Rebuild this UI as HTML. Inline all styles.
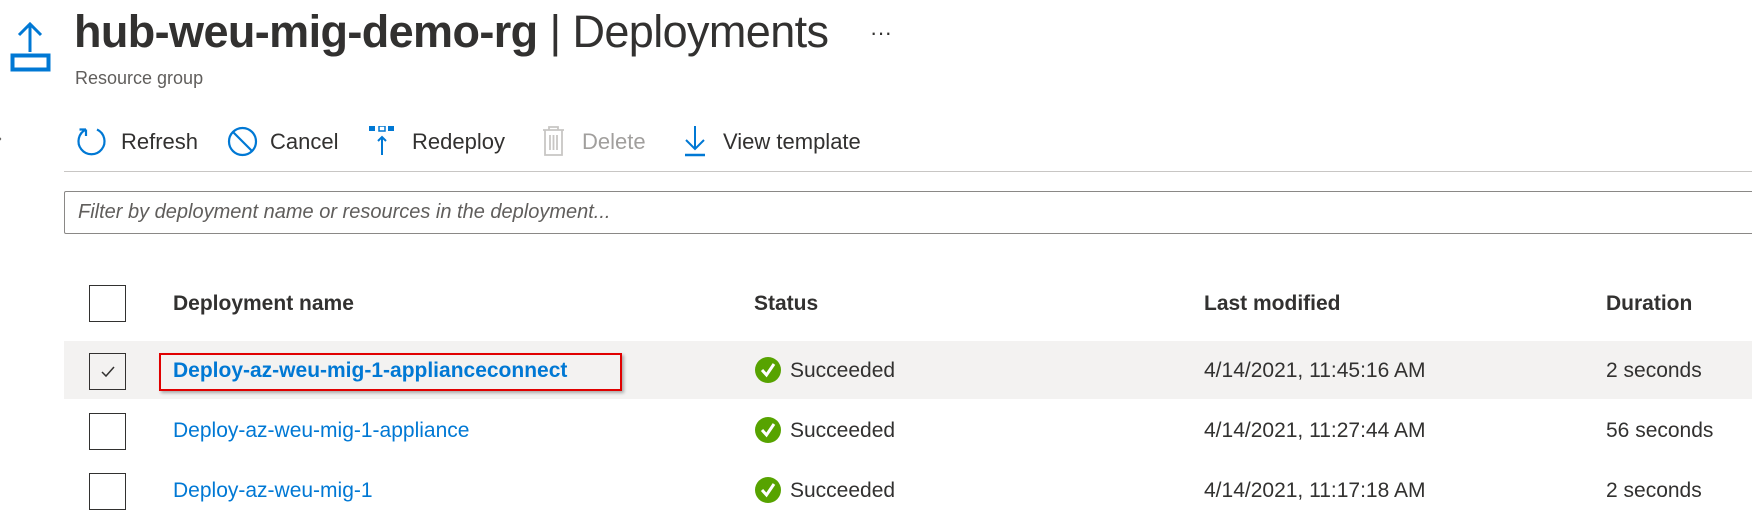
<!DOCTYPE html>
<html><head><meta charset="utf-8"><style>
body{margin:0;width:1752px;height:529px;background:#fff;font-family:"Liberation Sans",sans-serif;color:#323130;position:relative;overflow:hidden}
.a{position:absolute;white-space:nowrap}
.tb{font-size:22px;color:#323130}
.hd{font-size:21px;font-weight:bold;color:#323130}
.cb{position:absolute;width:35px;height:35px;border:1px solid #323130;left:89px}
.lk{color:#0078d4;font-size:21px}
.tx{font-size:21px;color:#323130}
</style></head><body>
<svg class="a" style="left:10px;top:22px" width="42" height="50" viewBox="0 0 42 50"><path d="M20 2V30M9 13L20 2L31 13" stroke="#0078d4" stroke-width="3" fill="none"/><rect x="2.5" y="33.5" width="36" height="14" stroke="#0078d4" stroke-width="4" fill="none"/></svg>
<div class="a" style="left:74px;top:6px;font-size:45px;color:#323130;letter-spacing:-0.6px"><b>hub-weu-mig-demo-rg</b> | Deployments</div>
<div class="a" style="left:870px;top:20px;font-size:22px;color:#323130">···</div>
<div class="a" style="left:75px;top:68px;font-size:18px;color:#605e5c">Resource group</div>
<div class="a" style="left:-4px;top:128px;font-size:18px;color:#605e5c">›</div>
<svg class="a" style="left:76px;top:126px" width="31" height="31" viewBox="0 0 31 31"><path d="M10 3.5A13 13 0 1 0 21 3.5M10 3.5V10M10 3.5H3.5" stroke="#0078d4" stroke-width="2.2" fill="none"/></svg>
<div class="a tb" style="left:121px;top:129px">Refresh</div>
<svg class="a" style="left:227px;top:126px" width="31" height="31" viewBox="0 0 31 31"><circle cx="15.5" cy="15.5" r="13.5" stroke="#0078d4" stroke-width="2.2" fill="none"/><path d="M6 6L25 25" stroke="#0078d4" stroke-width="2.2"/></svg>
<div class="a tb" style="left:270px;top:129px">Cancel</div>
<svg class="a" style="left:369px;top:126px" width="28" height="30" viewBox="0 0 28 30"><rect x="0" y="0" width="6" height="5" fill="#0078d4"/><rect x="10" y="0" width="6" height="5" fill="none" stroke="#0078d4" stroke-width="1.5"/><rect x="19" y="0" width="6" height="5" fill="#0078d4"/><path d="M13 29V11M9 15L13 11L17 15" stroke="#0078d4" stroke-width="2" fill="none"/></svg>
<div class="a tb" style="left:412px;top:129px">Redeploy</div>
<svg class="a" style="left:541px;top:125px" width="25" height="32" viewBox="0 0 25 32"><path d="M2 5H23M8 5V2H17V5M4 5V30H21V5M9 10V25M12.5 10V25M16 10V25" stroke="#c8c6c4" stroke-width="1.8" fill="none"/></svg>
<div class="a tb" style="left:582px;top:129px;color:#a19f9d">Delete</div>
<svg class="a" style="left:683px;top:125px" width="24" height="32" viewBox="0 0 24 32"><path d="M12 1V24M3 15L12 24L21 15" stroke="#0078d4" stroke-width="2" fill="none"/><path d="M2 30H22" stroke="#0078d4" stroke-width="2.5"/></svg>
<div class="a tb" style="left:723px;top:129px">View template</div>
<div class="a" style="left:64px;top:171px;width:1688px;height:1px;background:#c8c6c4"></div>
<div class="a" style="left:64px;top:191px;width:1690px;height:41px;border:1px solid #8a8886;border-radius:2px"></div>
<div class="a" style="left:78px;top:201px;font-size:20px;font-style:italic;color:#605e5c">Filter by deployment name or resources in the deployment...</div>
<div class="cb" style="top:285px"></div>
<div class="a hd" style="left:173px;top:292px">Deployment name</div>
<div class="a hd" style="left:754px;top:292px">Status</div>
<div class="a hd" style="left:1204px;top:292px">Last modified</div>
<div class="a hd" style="left:1606px;top:292px">Duration</div>
<div class="a" style="left:64px;top:341px;width:1688px;height:58px;background:#f3f2f1"></div>
<div class="cb" style="top:353px"></div>
<svg class="a" style="left:101px;top:366px" width="14" height="12"><path d="M1 6L5 10L13 1" stroke="#323130" stroke-width="1.5" fill="none"/></svg>
<div class="a" style="left:159px;top:353px;width:459px;height:34px;border:2px solid #e00000;box-shadow:2px 2px 3px rgba(0,0,0,.3)"></div>
<div class="a lk" style="left:173px;top:359px;font-weight:bold">Deploy-az-weu-mig-1-applianceconnect</div>
<div class="cb" style="top:413px"></div>
<div class="a lk" style="left:173px;top:419px">Deploy-az-weu-mig-1-appliance</div>
<div class="cb" style="top:473px"></div>
<div class="a lk" style="left:173px;top:479px">Deploy-az-weu-mig-1</div>
<svg class="a" style="left:755px;top:357px" width="26" height="26"><circle cx="13" cy="13" r="13" fill="#57a300"/><path d="M7 13L11.5 18L19 7" stroke="#fff" stroke-width="3" fill="none"/></svg>
<svg class="a" style="left:755px;top:417px" width="26" height="26"><circle cx="13" cy="13" r="13" fill="#57a300"/><path d="M7 13L11.5 18L19 7" stroke="#fff" stroke-width="3" fill="none"/></svg>
<svg class="a" style="left:755px;top:477px" width="26" height="26"><circle cx="13" cy="13" r="13" fill="#57a300"/><path d="M7 13L11.5 18L19 7" stroke="#fff" stroke-width="3" fill="none"/></svg>
<div class="a tx" style="left:790px;top:359px">Succeeded</div>
<div class="a tx" style="left:790px;top:419px">Succeeded</div>
<div class="a tx" style="left:790px;top:479px">Succeeded</div>
<div class="a tx" style="left:1204px;top:359px">4/14/2021, 11:45:16 AM</div>
<div class="a tx" style="left:1204px;top:419px">4/14/2021, 11:27:44 AM</div>
<div class="a tx" style="left:1204px;top:479px">4/14/2021, 11:17:18 AM</div>
<div class="a tx" style="left:1606px;top:359px">2 seconds</div>
<div class="a tx" style="left:1606px;top:419px">56 seconds</div>
<div class="a tx" style="left:1606px;top:479px">2 seconds</div>
</body></html>
